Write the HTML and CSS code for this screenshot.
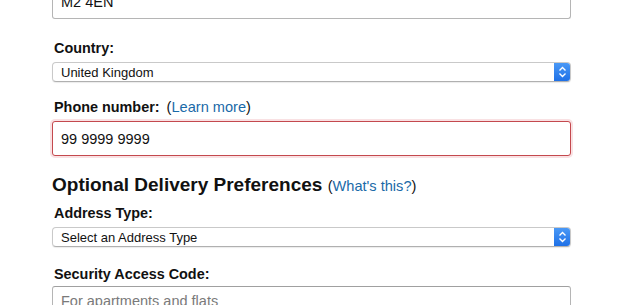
FILE: index.html
```html
<!DOCTYPE html>
<html lang="en">
<head>
  <meta charset="UTF-8" />
  <title>Delivery address</title>
  <link rel="stylesheet" href="styles.css">
</head>
<body>
  <form class="address-form">
    <input class="text-input" type="text" value="M2 4EN">

    <label class="field-label">Country:</label>
    <div class="select-box">
      <span class="select-text">United Kingdom</span>
      <span class="select-btn">
        <svg width="9" height="12" viewBox="0 0 9 12"><path d="M1.5 4.5 L4.5 1.5 L7.5 4.5 M1.5 7.5 L4.5 10.5 L7.5 7.5" fill="none" stroke="#fff" stroke-width="1.4"/></svg>
      </span>
    </div>

    <label class="field-label label-phone">Phone number: <span class="hint">(<a href="#">Learn more</a>)</span></label>
    <input class="text-input invalid" type="text" value="99 9999 9999">

    <h2 class="section-title">Optional Delivery Preferences <span class="hint">(<a href="#">What's this?</a>)</span></h2>

    <label class="field-label label-type">Address Type:</label>
    <div class="select-box">
      <span class="select-text">Select an Address Type</span>
      <span class="select-btn">
        <svg width="9" height="12" viewBox="0 0 9 12"><path d="M1.5 4.5 L4.5 1.5 L7.5 4.5 M1.5 7.5 L4.5 10.5 L7.5 7.5" fill="none" stroke="#fff" stroke-width="1.4"/></svg>
      </span>
    </div>

    <label class="field-label label-code">Security Access Code:</label>
    <input class="text-input code-input" type="text" placeholder="For apartments and flats">
  </form>
</body>
</html>
```

FILE: styles.css
```css
body {
  margin: 0;
  background: #fff;
  font-family: "Liberation Sans", Arial, sans-serif;
  color: #111;
  overflow: hidden;
}
.address-form {
  display: flex;
  flex-direction: column;
  width: 519px;
  margin: -16px 0 0 52px;
}
.text-input {
  box-sizing: border-box;
  height: 35px;
  padding: 0 8px;
  font-family: inherit;
  font-size: 14.5px;
  color: #111;
  border: 1px solid #b5b5b5;
  border-top-color: #a0a0a0;
  border-radius: 3px;
  outline: none;
}
.code-input {
  height: 30px;
}
.text-input::placeholder {
  color: #7a7a7a;
}
.text-input.invalid {
  border-color: #c4494e;
  box-shadow: 0 0 0 2px rgba(220, 70, 80, 0.16);
}
.field-label {
  display: block;
  margin: 21px 0 6px 2px;
  font-size: 14.4px;
  line-height: 16px;
  font-weight: bold;
}
.label-phone {
  margin-top: 17px;
}
.label-type {
  margin-top: 8px;
}
.label-code {
  margin-top: 19px;
  margin-bottom: 4px;
}
.hint {
  font-size: 14.6px;
  font-weight: normal;
  margin-left: 3px;
}
.hint a {
  color: #1a6aa8;
  text-decoration: none;
}
.section-title {
  margin: 18px 0 0;
  font-size: 19px;
  line-height: 22px;
}
.section-title .hint {
  margin-left: 0;
}
.select-box {
  box-sizing: border-box;
  height: 20px;
  display: flex;
  align-items: center;
  border: 1px solid #c9c9c9;
  border-bottom-color: #b0b0b0;
  border-radius: 4px;
  box-shadow: 0 1px 1px rgba(0, 0, 0, 0.08);
  overflow: hidden;
}
.select-text {
  flex: 1;
  padding-left: 8px;
  font-size: 13px;
}
.select-btn {
  width: 17px;
  height: 20px;
  margin: -1px -1px -1px 0;
  display: flex;
  align-items: center;
  justify-content: center;
  background: linear-gradient(#4c9bf7, #1c6ee6);
}
```
